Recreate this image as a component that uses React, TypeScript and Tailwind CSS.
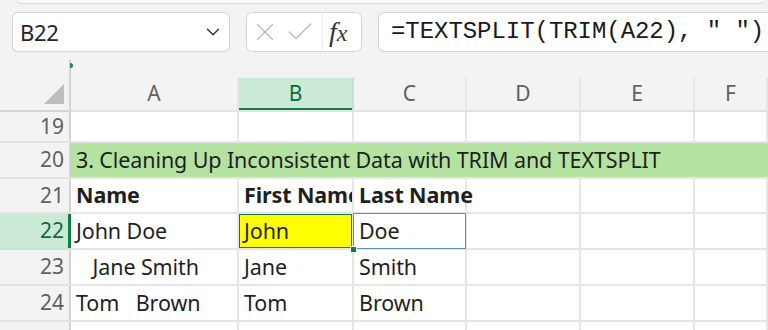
import { Check, ChevronDown, X } from "lucide-react";

const cols = ["A", "B", "C", "D", "E", "F"];
const colWidths = ["w-[168px]", "w-[115px]", "w-[113px]", "w-[114px]", "w-[114px]", "flex-1"];

type Row = { n: number; h: string; cells: string[]; bold?: boolean; band?: boolean; hideNum?: boolean };

const rows: Row[] = [
  { n: 19, h: "h-[31px]", cells: ["", "", "", "", "", ""] },
  { n: 20, h: "h-[36px]", cells: ["3. Cleaning Up Inconsistent Data with TRIM and TEXTSPLIT"], band: true },
  { n: 21, h: "h-[35px]", cells: ["Name", "First Name", "Last Name", "", "", ""], bold: true },
  { n: 22, h: "h-[36px]", cells: ["John Doe", "John", "Doe", "", "", ""] },
  { n: 23, h: "h-[36px]", cells: ["   Jane Smith", "Jane", "Smith", "", "", ""] },
  { n: 24, h: "h-[36px]", cells: ["Tom   Brown", "Tom", "Brown", "", "", ""] },
  { n: 25, h: "h-[36px]", cells: ["", "", "", "", "", ""], hideNum: true },
];

const cellFont = "font-['Noto_Sans',sans-serif] text-[21.5px] tracking-[-0.1px] text-[#1f1f1f]";

function FormulaBar() {
  return (
    <div className="relative h-[60px] bg-[#f3f3f3]">
      <div className="absolute left-[14px] right-0 top-[-6px] h-[10px] rounded-b-[8px] border border-[#d9d9d9] bg-[#f8f8f8]" />
      <div className="flex gap-4 pl-3 pt-3">
        <div className="flex h-10 w-[218px] shrink-0 items-center justify-between rounded-md border border-[#d4d4d4] bg-white pl-[7px] pr-[5px] shadow-[0_1px_1px_rgba(0,0,0,0.04)]">
          <span className="font-['Noto_Sans',sans-serif] text-[22px] tracking-[-0.3px] text-[#242424]">B22</span>
          <ChevronDown size={22} strokeWidth={1.6} className="text-[#333]" />
        </div>
        <div className="flex h-10 w-[116px] shrink-0 items-center rounded-md border border-[#d4d4d4] bg-white">
          <X size={30} strokeWidth={0.9} className="ml-[3px] text-[#b5b5b5]" />
          <Check size={32} strokeWidth={0.9} className="ml-[4px] text-[#b5b5b5]" />
          <div className="ml-[6px] h-full w-px bg-[#ececec]" />
          <span className="ml-[6px] font-['Liberation_Serif',serif] text-[28px] italic leading-none text-[#333]">
            f<span className="text-[24px]">x</span>
          </span>
        </div>
        <div className="flex h-10 min-w-0 flex-1 items-center overflow-hidden rounded-l-md border border-r-0 border-[#d4d4d4] bg-white pl-[12px]">
          <span className="whitespace-pre font-['Liberation_Mono',monospace] text-[24px] tracking-[-0.05px] text-[#1a1a1a]">
            =TEXTSPLIT(TRIM(A22), " ")
          </span>
        </div>
      </div>
    </div>
  );
}

function ColumnHeaders() {
  return (
    <div className="flex h-[52px] bg-[#f3f3f3]">
      <div className="relative w-[71px] shrink-0 border-r-2 border-b-2 border-[#d3d3d3]">
        <div className="absolute left-[44px] top-[24px] h-0 w-0 border-b-[20px] border-l-[20px] border-b-[#bdbdbd] border-l-transparent" />
        <div className="absolute left-[70px] top-[3px] h-[5px] w-[3px] rounded-r-full bg-[#1e8a4c]" />
      </div>
      {cols.map((c, i) => {
        const active = c === "B";
        return (
          <div key={c} className={`flex shrink-0 flex-col justify-end border-b-2 border-[#e3e3e3] ${colWidths[i]}`}>
            <div
              className={`flex h-[32px] items-center justify-center border-r-2 font-['Noto_Sans',sans-serif] text-[21px] ${
                active
                  ? "border-[#c3e0cd] bg-[#caead6] text-[#0f6b38] shadow-[inset_0_-2px_0_#107c41]"
                  : "border-[#e6e6e6] text-[#616161]"
              }`}
            >
              {c}
            </div>
          </div>
        );
      })}
    </div>
  );
}

function GridRow({ row }: { row: Row }) {
  const active = row.n === 22;
  return (
    <div className={`flex bg-white ${row.h}`}>
      <div
        className={`flex w-[71px] shrink-0 items-center justify-end border-b-2 pr-[7px] font-['Noto_Sans',sans-serif] text-[21px] ${
          active
            ? "border-[#c9e4d2] bg-[#caead6] text-[#0f6b38] shadow-[inset_-3px_0_0_#107c41]"
            : "border-[#e3e3e3] bg-[#f3f3f3] text-[#616161] shadow-[inset_-2px_0_0_#d3d3d3]"
        }`}
      >
        {row.hideNum ? "" : row.n}
      </div>
      {row.band ? (
        <div className="flex flex-1 items-center border-b-2 border-[#e6e6e6] bg-[#b3e2a1] pl-[5px]">
          <span className={`whitespace-pre ${cellFont}`}>{row.cells[0]}</span>
        </div>
      ) : (
        cols.map((c, i) => {
          const text = row.cells[i] ?? "";
          const selected = active && c === "B";
          const peer = active && c === "C";
          return (
            <div
              key={c}
              className={`relative flex shrink-0 items-center border-r-2 border-b-2 border-[#e6e6e6] pl-[5px] ${colWidths[i]} ${
                selected ? "bg-[#ffff00]" : ""
              } ${i === 1 ? "overflow-hidden" : ""} ${i === 2 ? "z-[1]" : ""}`}
            >
              <span className={`whitespace-pre ${cellFont} ${row.bold ? "font-bold" : ""}`}>{text}</span>
              {selected && (
                <div className="pointer-events-none absolute -left-[2px] -top-[2px] bottom-[-2px] right-[-2px] border-[3px] border-[#107c41]" />
              )}
              {peer && <div className="pointer-events-none absolute inset-[-1px] border border-[#5a8ad6]" />}
            </div>
          );
        })
      )}
    </div>
  );
}

export default function App() {
  return (
    <div className="h-[330px] w-[768px] overflow-hidden bg-white">
      <FormulaBar />
      <ColumnHeaders />
      <div className="relative">
        {rows.map((r) => (
          <GridRow key={r.n} row={r} />
        ))}
        <div className="absolute left-[350px] top-[134px] z-10 h-[7px] w-[7px] border border-white bg-[#107c41]" />
      </div>
    </div>
  );
}
